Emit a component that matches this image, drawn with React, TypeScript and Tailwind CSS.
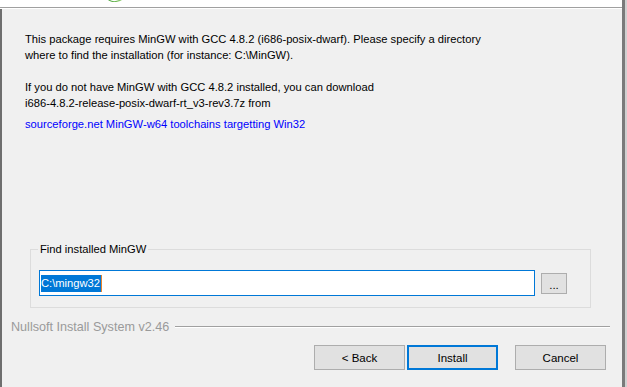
import React from 'react'

const ui = { fontFamily: '"Liberation Sans", Arial, sans-serif' }

function WinButton({ label, primary }: { label: string; primary?: boolean }) {
  return (
    <button
      className={
        'w-[91px] h-[25px] bg-[#e1e1e1] text-[11.5px] text-black ' +
        (primary ? 'border-2 border-[#0078d7]' : 'border border-[#adadad]')
      }
    >
      {label}
    </button>
  )
}

export default function App() {
  return (
    <div className="w-[627px] h-[387px] flex bg-[#f0f0f0] overflow-hidden" style={ui}>
      <div className="flex-1 flex flex-col">
        {/* header strip (bottom of the banner) */}
        <div className="h-[7px] bg-white flex">
          <svg width="20" height="7" viewBox="0 0 20 7" className="ml-[105px]">
            <defs>
              <linearGradient id="g" x1="0" x2="1" y1="0" y2="0">
                <stop offset="0" stopColor="#3a9a2a" />
                <stop offset="1" stopColor="#9ad27a" />
              </linearGradient>
            </defs>
            <path d="M3 0 C6 2.5 12 3 17 0 L14 0 C11 1.5 7 1.5 5 0 Z" fill="url(#g)" />
          </svg>
        </div>
        <div className="h-px bg-[#a0a0a0]" />
        <div className="h-px bg-white" />

        <div className="flex-1 flex flex-col border-l-2 border-[#6e6e6e] text-[11.2px] leading-[16px] text-black">
          <div className="pl-[23px] pt-[22px]">
            <p>
              This package requires MinGW with GCC 4.8.2 (i686-posix-dwarf). Please specify a directory
              <br />
              where to find the installation (for instance: C:\MinGW).
            </p>
            <p className="mt-[16px]">
              If you do not have MinGW with GCC 4.8.2 installed, you can download
              <br />
              i686-4.8.2-release-posix-dwarf-rt_v3-rev3.7z from
            </p>
            <p className="mt-[5px] text-[#0000ff]">sourceforge.net MinGW-w64 toolchains targetting Win32</p>

            <fieldset className="mt-[109px] ml-[5px] w-[561px] h-[67px] border border-[#dcdcdc]">
              <legend className="ml-[7px] px-[2px] leading-[16px]">Find installed MinGW</legend>
              <div className="flex items-center pl-[8px] mt-[13px] gap-[6px]">
                <div className="w-[496px] h-[26px] bg-white border border-[#0078d7] flex items-center pl-[1px]">
                  <span className="bg-[#0078d7] text-white leading-[17px] pr-[1px]">C:\mingw32</span>
                  <span className="w-px h-[17px] bg-[#e8842c]" />
                </div>
                <button className="w-[26px] h-[21px] bg-[#e1e1e1] border border-[#adadad] text-[11.5px] leading-[14px] pt-[4px]">
                  ...
                </button>
              </div>
            </fieldset>
          </div>

          <div className="mt-[11px] pl-[9px] pr-[12px] flex items-center text-[12.6px] text-[#9a9a9a]">
            <span>Nullsoft Install System v2.46</span>
            <div className="ml-[6px] flex-1 flex flex-col">
              <div className="h-px bg-[#a0a0a0]" />
              <div className="h-px bg-white" />
            </div>
          </div>

          <div className="mt-[10px] flex pl-[312px]">
            <WinButton label="< Back" />
            <div className="ml-[2px]">
              <WinButton label="Install" primary />
            </div>
            <div className="ml-[17px]">
              <WinButton label="Cancel" />
            </div>
          </div>
        </div>
      </div>
      <div className="w-[5px] flex">
        <div className="w-[3px] bg-[#7a7a7a]" />
        <div className="w-[2px] bg-[#d0d0d0]" />
      </div>
    </div>
  )
}
